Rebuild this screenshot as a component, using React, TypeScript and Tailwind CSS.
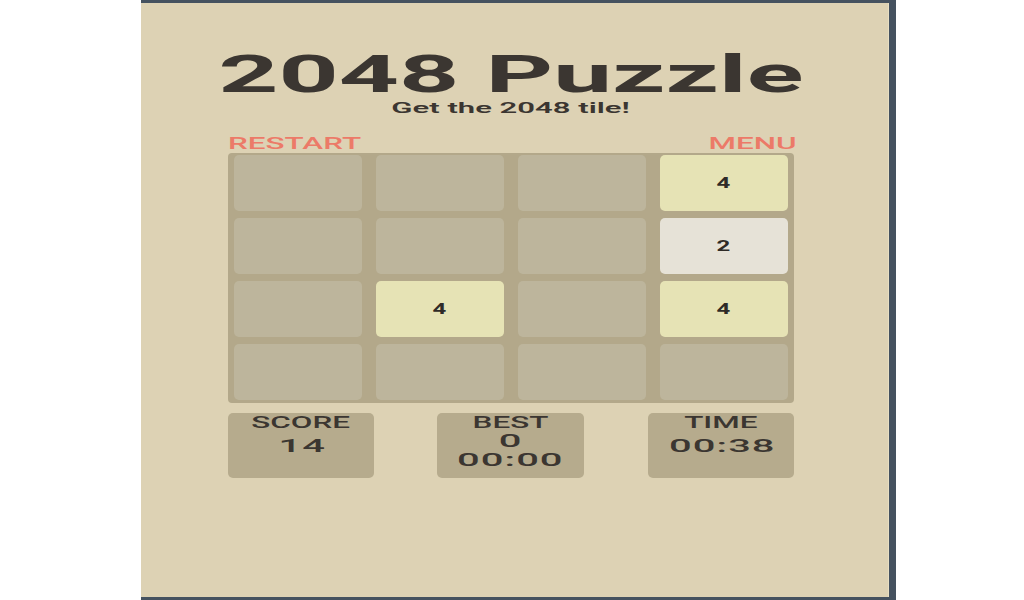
import type { ReactNode } from 'react';

type Tile = number | null;

const board: Tile[][] = [
  [null, null, null, 4],
  [null, null, null, 2],
  [null, 4, null, 4],
  [null, null, null, null],
];

const tileColors: Record<number, string> = {
  2: 'bg-[#e6e2d7]',
  4: 'bg-[#e6e3b5]',
};

// Text on this screen is drawn wide; stretch each run horizontally around its anchor.
function Wide({ children, className = '' }: { children: ReactNode; className?: string }) {
  return <span className={`inline-block whitespace-nowrap ${className}`}>{children}</span>;
}

function StatBox({ label, lines }: { label: string; lines: string[] }) {
  const stacked = lines.length > 1;
  return (
    <div className="h-[65px] rounded-[5px] bg-[#b6ab8d] flex flex-col items-center pt-[1px] text-[#3b3631]">
      <Wide className="text-[17px] leading-none font-medium scale-x-[1.85]">{label}</Wide>
      <div className={`flex flex-col items-center ${stacked ? '' : 'mt-[5px] pl-[4px]'}`}>
        {lines.map((line, i) => (
          <Wide key={i} className="text-[19px] leading-none font-medium scale-x-[2.1] tracking-[0.5px]">
            {line}
          </Wide>
        ))}
      </div>
    </div>
  );
}

export default function App() {
  return (
    <div className="w-full h-[600px] bg-white flex" style={{ fontFamily: 'Roboto, "Noto Sans", sans-serif' }}>
      {/* device frame */}
      <div className="ml-[141px] w-[755px] h-[600px] bg-[#45525f] pt-[3px] pb-[3px] pr-[7px] flex">
        <div className="flex-1 bg-[#ddd2b4] border-r border-[#e8dfc3] flex flex-col items-center">
          <div className="w-[566px] ml-[-8px] flex flex-col items-center">
            <h1 className="pt-[46px] text-[52px] leading-none font-bold text-[#3b3631]">
              <Wide className="scale-x-[2.02]">2048 Puzzle</Wide>
            </h1>
            <p className="text-[15px] leading-none font-semibold text-[#3b3631]">
              <Wide className="scale-x-[2.07]">Get the 2048 tile!</Wide>
            </p>

            <div className="w-[569px] self-start mt-[19px] flex justify-between text-[17px] leading-none font-medium text-[#ec7a68]">
              <Wide className="origin-left scale-x-[1.85]">RESTART</Wide>
              <Wide className="origin-right scale-x-[1.85]">MENU</Wide>
            </div>

            {/* board */}
            <div className="w-full mt-[1px] h-[250px] rounded-[4px] bg-[#b3a88a] px-[6px] pt-[2px] pb-[3px] grid grid-cols-4 grid-rows-4 gap-x-[14px] gap-y-[7px]">
              {board.flat().map((v, i) => (
                <div
                  key={i}
                  className={`rounded-[5px] flex items-center justify-center ${v ? tileColors[v] : 'bg-[#bdb59c]'}`}
                >
                  {v && (
                    <Wide className="text-[15px] leading-none font-bold text-[#2f2b27] scale-x-[1.6]">{v}</Wide>
                  )}
                </div>
              ))}
            </div>

            {/* stats */}
            <div className="w-full mt-[10px] grid grid-cols-[146px_147px_146px] justify-between">
              <StatBox label="SCORE" lines={['14']} />
              <StatBox label="BEST" lines={['0', '00:00']} />
              <StatBox label="TIME" lines={['00:38']} />
            </div>
          </div>
        </div>
      </div>
    </div>
  );
}
